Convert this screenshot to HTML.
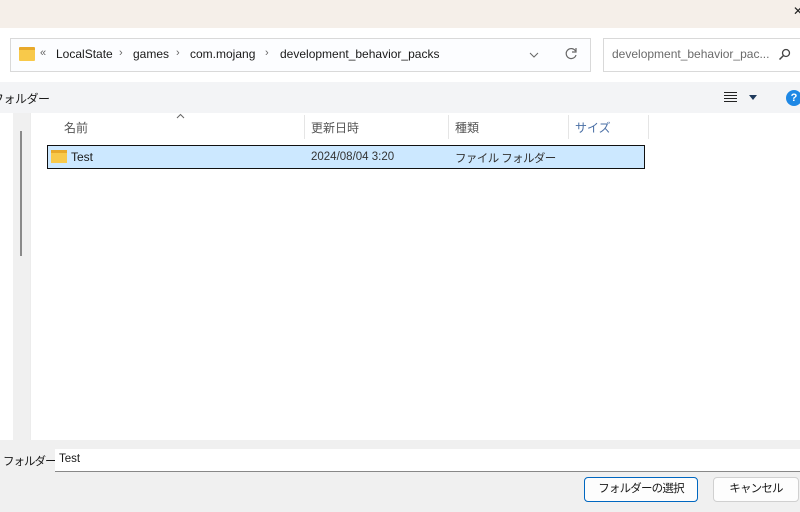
<!DOCTYPE html>
<html><head><meta charset="utf-8"><style>
*{margin:0;padding:0;box-sizing:border-box}
body{width:800px;height:512px;overflow:hidden;background:#f0f0f0;font-family:"Liberation Sans","Noto Sans CJK JP",sans-serif;font-size:12px;color:#1a1a1a;position:relative}
.a{position:absolute;white-space:nowrap}
.c{color:#666;font-size:11px}
</style></head><body>
<div class="a" style="left:0;top:0;width:800px;height:28px;background:#f5efe9"></div>
<div class="a" style="left:793px;top:4px;font-size:12px;color:#222">✕</div>
<div class="a" style="left:0;top:28px;width:800px;height:54px;background:#fff"></div>
<div class="a" style="left:10px;top:38px;width:581px;height:34px;border:1px solid #d9d9d9;background:#fcfdff"></div>
<div class="a" style="left:19px;top:47px;width:16px;height:14px;background:#f8c94a;border-radius:1px;border-top:3px solid #e8a92a"></div>
<div class="a c" style="left:40px;top:47px">«</div>
<div class="a" style="left:56px;top:47px;font-size:12px">LocalState</div>
<div class="a c" style="left:119px;top:47px">›</div>
<div class="a" style="left:133px;top:47px;font-size:12px">games</div>
<div class="a c" style="left:176px;top:47px">›</div>
<div class="a" style="left:190px;top:47px;font-size:12px">com.mojang</div>
<div class="a c" style="left:265px;top:47px">›</div>
<div class="a" style="left:280px;top:47px;font-size:12px">development_behavior_packs</div>
<svg class="a" style="left:529px;top:52px" width="10" height="6"><path d="M1 1L5 5L9 1" stroke="#666" fill="none"/></svg>
<svg class="a" style="left:564px;top:47px" width="14" height="14"><path d="M11.5 4A5 5 0 1 0 12 8" stroke="#666" fill="none" stroke-width="1.2"/><path d="M12 1V5H8" stroke="#666" fill="none" stroke-width="1.2"/></svg>
<div class="a" style="left:603px;top:38px;width:200px;height:34px;border:1px solid #d9d9d9;background:#fff"></div>
<div class="a" style="left:612px;top:47px;font-size:12px;color:#6b6b6b">development_behavior_pac...</div>
<svg class="a" style="left:778px;top:48px" width="13" height="13"><circle cx="8" cy="5" r="3.5" stroke="#444" fill="none" stroke-width="1.3"/><path d="M5.5 7.5L1.5 11.5" stroke="#444" stroke-width="1.5"/></svg>
<div class="a" style="left:0;top:82px;width:800px;height:31px;background:#f3f4f6"></div>
<div class="a" style="left:-8px;top:90px;font-size:12px;letter-spacing:-0.5px">フォルダー</div>
<svg class="a" style="left:724px;top:91px" width="14" height="12"><path d="M0 1.5H13M0 4.5H13M0 7.5H13M0 10.5H13" stroke="#222"/></svg>
<div class="a" style="left:749px;top:95px;width:0;height:0;border-left:4px solid transparent;border-right:4px solid transparent;border-top:5px solid #1f3a5c"></div>
<div class="a" style="left:786px;top:90px;width:16px;height:16px;border-radius:50%;background:#1e88e5;color:#fff;font-size:11px;font-weight:bold;text-align:center;line-height:16px">?</div>
<div class="a" style="left:0;top:113px;width:13px;height:327px;background:#fff"></div>
<div class="a" style="left:20px;top:131px;width:2px;height:125px;background:#8a8a8a"></div>
<div class="a" style="left:30px;top:113px;width:770px;height:327px;background:#fff;border-left:1px solid #ececec"></div>
<div class="a" style="left:304px;top:115px;width:1px;height:24px;background:#e5e5e5"></div>
<div class="a" style="left:448px;top:115px;width:1px;height:24px;background:#e5e5e5"></div>
<div class="a" style="left:568px;top:115px;width:1px;height:24px;background:#e5e5e5"></div>
<div class="a" style="left:648px;top:115px;width:1px;height:24px;background:#e5e5e5"></div>
<svg class="a" style="left:176px;top:113px" width="9" height="6"><path d="M1 5L4.5 1.5L8 5" stroke="#666" fill="none"/></svg>
<div class="a" style="left:64px;top:119px;color:#555">名前</div>
<div class="a" style="left:311px;top:119px;color:#555">更新日時</div>
<div class="a" style="left:455px;top:119px;color:#555">種類</div>
<div class="a" style="left:575px;top:119px;color:#4a6fa5">サイズ</div>
<div class="a" style="left:47px;top:145px;width:598px;height:24px;background:#cce8ff;border:1px solid #111"></div>
<div class="a" style="left:51px;top:150px;width:16px;height:13px;background:#f8c94a;border-top:3px solid #e8a92a"></div>
<div class="a" style="left:71px;top:150px">Test</div>
<div class="a" style="left:311px;top:151px;color:#333;font-size:11.5px">2024/08/04 3:20</div>
<div class="a" style="left:455px;top:150px;color:#333;font-size:11.5px;letter-spacing:-0.6px">ファイル フォルダー</div>
<div class="a" style="left:3px;top:453px;font-size:11.5px;letter-spacing:-1px">フォルダー:</div>
<div class="a" style="left:55px;top:449px;width:745px;height:23px;background:#fff;border-bottom:1px solid #888"></div>
<div class="a" style="left:59px;top:453px;font-size:11.5px">Test</div>
<div class="a" style="left:584px;top:477px;width:114px;height:25px;background:#fdfdfd;border:1px solid #0067c0;border-radius:4px;text-align:center;line-height:23px;font-size:11.5px;letter-spacing:-0.8px">フォルダーの選択</div>
<div class="a" style="left:713px;top:477px;width:86px;height:25px;background:#fdfdfd;border:1px solid #d0d0d0;border-radius:4px;text-align:center;line-height:23px;font-size:11.5px;letter-spacing:-0.8px">キャンセル</div>
</body></html>
